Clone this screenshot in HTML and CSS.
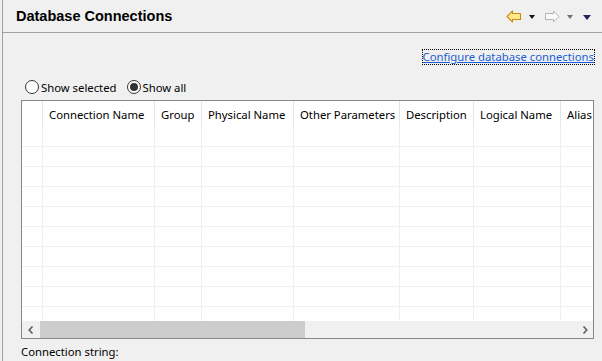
FILE: index.html
```html
<!DOCTYPE html>
<html>
<head>
<meta charset="utf-8">
<link rel="stylesheet" href="styles.css">
</head>
<body>
<div class="view">
  <div class="titlebar">
    <div class="title">Database Connections</div>
    <div class="tools">
      <svg class="arrow" width="16" height="13" viewBox="0 0 16 13"><path d="M1 6.5 L6.5 1 L6.5 3.5 L14.5 3.5 L14.5 9.5 L6.5 9.5 L6.5 12 Z" fill="#ffe98a" stroke="#d08a10" stroke-width="1.1" stroke-linejoin="round"/></svg>
      <span class="tri dark"></span>
      <svg class="arrow fwd" width="16" height="13" viewBox="0 0 16 13"><path d="M15 6.5 L9.5 1 L9.5 3.5 L1.5 3.5 L1.5 9.5 L9.5 9.5 L9.5 12 Z" fill="#fafafa" stroke="#b4b4b4" stroke-width="1" stroke-linejoin="round"/></svg>
      <span class="tri grey"></span>
      <span class="tri menu"></span>
    </div>
  </div>
  <div class="content">
    <div class="linkrow"><a class="link">Configure database connections</a></div>
    <div class="radios">
      <label class="radio"><span class="dot"></span>Show selected</label>
      <label class="radio"><span class="dot on"></span>Show all</label>
    </div>
    <div class="table">
      <div class="thead">
        <div class="c c0"></div>
        <div class="c c1">Connection Name</div>
        <div class="c c2">Group</div>
        <div class="c c3">Physical Name</div>
        <div class="c c4">Other Parameters</div>
        <div class="c c5">Description</div>
        <div class="c c6">Logical Name</div>
        <div class="c c7">Alias</div>
      </div>
      <div class="tbody">
        <div class="row"><div class="c c0"></div><div class="c c1"></div><div class="c c2"></div><div class="c c3"></div><div class="c c4"></div><div class="c c5"></div><div class="c c6"></div><div class="c c7"></div></div>
        <div class="row"><div class="c c0"></div><div class="c c1"></div><div class="c c2"></div><div class="c c3"></div><div class="c c4"></div><div class="c c5"></div><div class="c c6"></div><div class="c c7"></div></div>
        <div class="row"><div class="c c0"></div><div class="c c1"></div><div class="c c2"></div><div class="c c3"></div><div class="c c4"></div><div class="c c5"></div><div class="c c6"></div><div class="c c7"></div></div>
        <div class="row"><div class="c c0"></div><div class="c c1"></div><div class="c c2"></div><div class="c c3"></div><div class="c c4"></div><div class="c c5"></div><div class="c c6"></div><div class="c c7"></div></div>
        <div class="row"><div class="c c0"></div><div class="c c1"></div><div class="c c2"></div><div class="c c3"></div><div class="c c4"></div><div class="c c5"></div><div class="c c6"></div><div class="c c7"></div></div>
        <div class="row"><div class="c c0"></div><div class="c c1"></div><div class="c c2"></div><div class="c c3"></div><div class="c c4"></div><div class="c c5"></div><div class="c c6"></div><div class="c c7"></div></div>
        <div class="row"><div class="c c0"></div><div class="c c1"></div><div class="c c2"></div><div class="c c3"></div><div class="c c4"></div><div class="c c5"></div><div class="c c6"></div><div class="c c7"></div></div>
        <div class="row"><div class="c c0"></div><div class="c c1"></div><div class="c c2"></div><div class="c c3"></div><div class="c c4"></div><div class="c c5"></div><div class="c c6"></div><div class="c c7"></div></div>
        <div class="row"><div class="c c0"></div><div class="c c1"></div><div class="c c2"></div><div class="c c3"></div><div class="c c4"></div><div class="c c5"></div><div class="c c6"></div><div class="c c7"></div></div>
        <div class="row"><div class="c c0"></div><div class="c c1"></div><div class="c c2"></div><div class="c c3"></div><div class="c c4"></div><div class="c c5"></div><div class="c c6"></div><div class="c c7"></div></div>
      </div>
      <div class="hscroll">
        <div class="sbtn"><svg width="6" height="8" viewBox="0 0 6 8"><path d="M4.5 0.5 L1.2 4 L4.5 7.5" fill="none" stroke="#606060" stroke-width="1.6"/></svg></div>
        <div class="track"><div class="thumb"></div></div>
        <div class="sbtn"><svg width="6" height="8" viewBox="0 0 6 8"><path d="M1.5 0.5 L4.8 4 L1.5 7.5" fill="none" stroke="#606060" stroke-width="1.6"/></svg></div>
      </div>
    </div>
    <div class="connstr">Connection string:</div>
  </div>
</div>
</body>
</html>
```

FILE: styles.css
```css
html, body {
  margin: 0;
  padding: 0;
  background: #f0f0f0;
  overflow: hidden;
}
body {
  width: 602px;
  height: 361px;
  font-family: "Noto Sans", "Open Sans", sans-serif;
  font-size: 11.3px;
  color: #000;
}
.view {
  margin-left: 2px;
  border-left: 1px solid #a0a0a0;
  height: 361px;
  display: flex;
  flex-direction: column;
}
.titlebar {
  height: 33px;
  border-bottom: 1px solid #a0a0a0;
  display: flex;
  align-items: center;
  justify-content: space-between;
  box-sizing: border-box;
  padding-left: 13px;
  padding-right: 11px;
}
.title {
  font-family: "Liberation Sans", Arial, sans-serif;
  font-weight: bold;
  font-size: 14.5px;
}
.tools {
  display: flex;
  align-items: center;
  margin-top: 1px;
}
.arrow { display: block; }
.tri {
  display: block;
  width: 0;
  height: 0;
  border-left: 3.5px solid transparent;
  border-right: 3.5px solid transparent;
  border-top: 4px solid #111;
  margin-left: 7px;
  margin-right: 9px;
  margin-top: 1px;
}
.tri.grey { border-top-color: #707070; margin-right: 10px; }
.tri.menu {
  border-left-width: 4.5px;
  border-right-width: 4.5px;
  border-top: 5px solid #2e1f5c;
  margin: 1px 0 0 0;
}
.content {
  flex: 1;
  display: flex;
  flex-direction: column;
  padding-left: 18px;
  padding-right: 8px;
}
.linkrow {
  display: flex;
  justify-content: flex-end;
  margin-top: 17px;
  height: 14px;
}
.link {
  color: #1a5fd6;
  text-decoration: underline;
  outline: 1px dotted #000;
  outline-offset: 0;
  line-height: 14px;
}
.radios {
  display: flex;
  margin-top: 16px;
  margin-left: 4px;
  height: 14px;
  align-items: center;
}
.radio {
  display: flex;
  align-items: center;
  margin-right: 10px;
}
.dot {
  width: 12px;
  height: 12px;
  border: 1px solid #333;
  border-radius: 50%;
  background: #fff;
  margin-right: 2px;
  box-sizing: content-box;
  display: flex;
  align-items: center;
  justify-content: center;
}
.dot.on::after {
  content: "";
  width: 8px;
  height: 8px;
  border-radius: 50%;
  background: #333;
}
.table {
  margin-top: 6px;
  width: 573px;
  height: 239px;
  box-sizing: border-box;
  border: 1px solid #828790;
  background: #fff;
  display: flex;
  flex-direction: column;
  overflow: hidden;
}
.thead {
  display: flex;
  height: 26px;
  flex: none;
}
.thead .c {
  border-right: 1px solid #e5e5e5;
  padding-left: 6px;
  padding-top: 2px;
  line-height: 24px;
  white-space: nowrap;
  overflow: hidden;
}
.c {
  flex: none;
  box-sizing: border-box;
}
.c0 { width: 21px; }
.c1 { width: 112px; }
.c2 { width: 47px; }
.c3 { width: 92px; }
.c4 { width: 106px; }
.c5 { width: 74px; }
.c6 { width: 87px; }
.c7 { width: 60px; }
.tbody {
  flex: 1;
  overflow: hidden;
}
.row {
  display: flex;
  height: 20px;
  box-sizing: border-box;
  border-bottom: 1px solid #f0f0f0;
}
.row .c {
  border-right: 1px solid #eaf0f8;
}
.hscroll {
  flex: none;
  height: 17px;
  display: flex;
  background: #f0f0f0;
}
.sbtn {
  width: 17px;
  display: flex;
  align-items: center;
  justify-content: center;
}
.track {
  flex: 1;
  display: flex;
  align-items: center;
}
.thumb {
  width: 265px;
  height: 17px;
  background: #cdcdcd;
  margin-left: 1px;
}
.connstr {
  margin-top: 5px;
}
```
